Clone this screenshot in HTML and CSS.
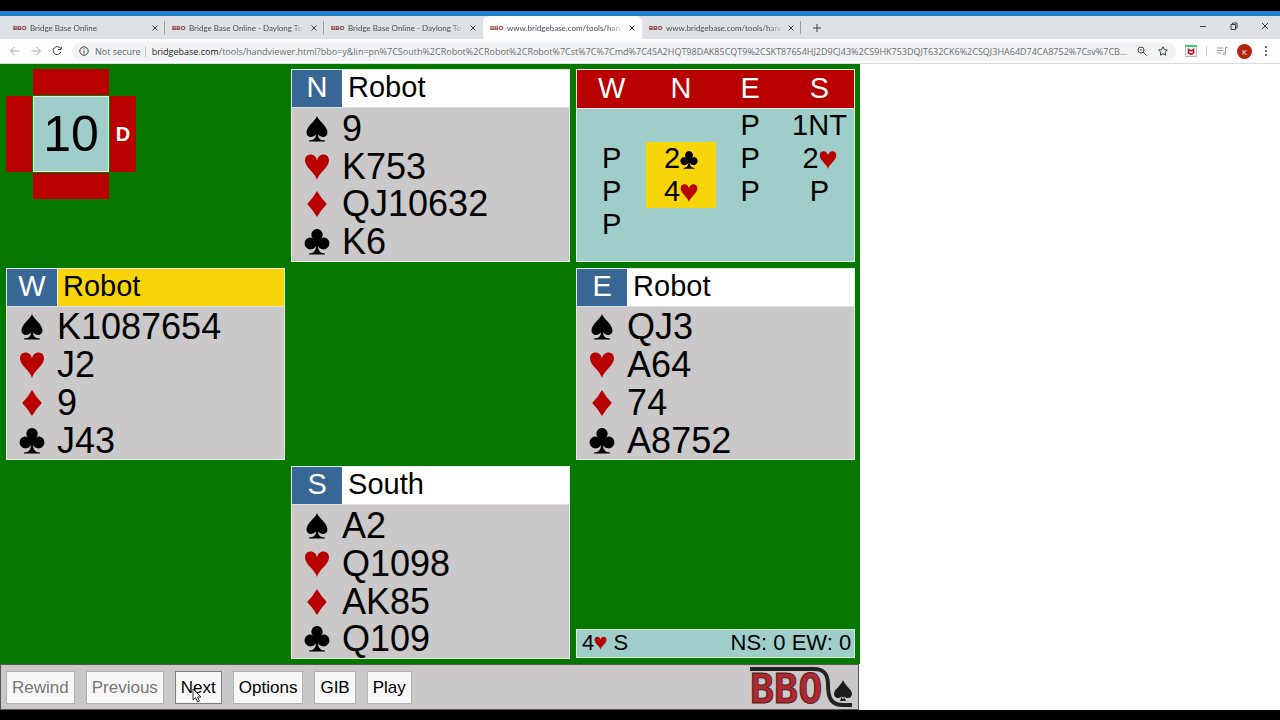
FILE: index.html
```
<!DOCTYPE html>
<html lang="en">
<head>
  <meta charset="UTF-8">
  <meta name="viewport" content="width=device-width, initial-scale=1.0">
  <title>Bridge Base Online - Hand Viewer</title>
  <link rel="stylesheet" href="styles.css">
</head>
<body>
  <!-- shared icons -->
  <svg class="sprite" aria-hidden="true">
    <symbol id="spade" viewBox="0 0 26 26"><path d="M13 0C14.500 5 23.500 10 23.500 16.500C23.500 21.500 17.500 22.500 14 18.500C14.200 22 16 24.300 21 24.500V25.500H5V24.500C10 24.300 11.800 22 12 18.500C8.500 22.500 2.500 21.500 2.500 16.500C2.500 10 11.500 5 13 0Z"/></symbol>
    <symbol id="heart" viewBox="0 0 26 26"><path d="M13 26C11.500 19 1 13.500 1 6.500C1 2.500 3.500 0.500 6.700 0.500C10 0.500 12.300 3 13 6.500C13.700 3 16 0.500 19.300 0.500C22.500 0.500 25 2.500 25 6.500C25 13.500 14.500 19 13 26Z"/></symbol>
    <symbol id="diamond" viewBox="0 0 26 26"><path d="M13 0Q17 7 22.800 13Q17 19 13 26Q9 19 3.200 13Q9 7 13 0Z"/></symbol>
    <symbol id="club" viewBox="0 0 26 26"><path d="M13 0A5.800 5.800 0 0 1 17 9.800C18 9 19 8.500 20.500 8.500A6 6 0 1 1 14 17C14.200 21.500 16 24.300 21 24.500V25.500H5V24.500C10 24.300 11.800 21.500 12 17A6 6 0 1 1 5.500 8.500C7 8.500 8 9 9 9.800A5.800 5.800 0 0 1 13 0Z"/></symbol>
    <symbol id="cross" viewBox="0 0 8 8"><path d="M1.500 1.500L6.500 6.500M6.500 1.500L1.500 6.500"/></symbol>
  </svg>

  <header class="browser">
    <div class="tab-strip">
      <div class="tab"><span class="favicon">BBO</span><span class="tab-title">Bridge Base Online</span><button class="tab-close" aria-label="Close tab"><svg><use href="#cross"/></svg></button></div>
      <div class="tab"><span class="favicon">BBO</span><span class="tab-title">Bridge Base Online - Daylong To</span><button class="tab-close" aria-label="Close tab"><svg><use href="#cross"/></svg></button></div>
      <div class="tab before-active"><span class="favicon">BBO</span><span class="tab-title">Bridge Base Online - Daylong To</span><button class="tab-close" aria-label="Close tab"><svg><use href="#cross"/></svg></button></div>
      <div class="tab active"><span class="favicon">BBO</span><span class="tab-title">www.bridgebase.com/tools/hand</span><button class="tab-close" aria-label="Close tab"><svg><use href="#cross"/></svg></button></div>
      <div class="tab"><span class="favicon">BBO</span><span class="tab-title">www.bridgebase.com/tools/hand</span><button class="tab-close" aria-label="Close tab"><svg><use href="#cross"/></svg></button></div>
      <button class="new-tab" aria-label="New tab"><svg viewBox="0 0 10 10"><path d="M5 1V9M1 5H9"/></svg></button>
      <div class="window-buttons">
        <button aria-label="Minimize"><svg viewBox="0 0 8 8"><path d="M1 4.500H7"/></svg></button>
        <button aria-label="Restore"><svg viewBox="0 0 8 8"><path d="M1 2.500H5.500V7.500H1ZM2.500 2.500V1H7V6H5.500"/></svg></button>
        <button aria-label="Close"><svg viewBox="0 0 8 8"><path d="M1 1L7 7M7 1L1 7"/></svg></button>
      </div>
    </div>

    <div class="address-row">
      <button class="nav-btn faded" aria-label="Back"><svg viewBox="0 0 12 12"><path d="M10.500 6H2M5.500 2L1.500 6L5.500 10"/></svg></button>
      <button class="nav-btn faded" aria-label="Forward"><svg viewBox="0 0 12 12"><path d="M1.500 6H10M6.500 2L10.500 6L6.500 10"/></svg></button>
      <button class="nav-btn" aria-label="Reload"><svg viewBox="0 0 12 12"><path d="M9.500 3.500A4 4 0 1 0 10 6.500M10.200 1.500V4.500H7"/></svg></button>
      <div class="omnibox">
        <svg class="info" viewBox="0 0 10 10"><circle cx="5" cy="5" r="4.200"/><path d="M5 4.500V7.500M5 2.500V3.500"/></svg>
        <span class="not-secure">Not secure</span>
        <label class="domain" for="url">bridgebase.com</label>
        <input id="url" type="text" value="/tools/handviewer.html?bbo=y&amp;lin=pn%7CSouth%2CRobot%2CRobot%2CRobot%7Cst%7C%7Cmd%7C4SA2HQT98DAK85CQT9%2CSKT87654HJ2D9CJ43%2CS9HK753DQJT632CK6%2CSQJ3HA64D74CA8752%7Csv%7CB...">
        <button class="box-btn" aria-label="Zoom"><svg viewBox="0 0 10 10"><circle cx="4" cy="4" r="3"/><path d="M6.200 6.200L9.500 9.500M2.700 4H5.300"/></svg></button>
        <button class="box-btn" aria-label="Bookmark"><svg viewBox="0 0 10 10"><path d="M5 0.800L6.300 3.600L9.400 4L7.100 6.100L7.700 9.200L5 7.700L2.300 9.200L2.900 6.100L0.600 4L3.700 3.600Z"/></svg></button>
      </div>
      <div class="extensions">
        <svg class="shield" viewBox="0 0 12 12"><path d="M0.500 0.500H11.500V11.500H0.500Z" fill="#f4f4f4" stroke="#b5b5b5"/><path d="M0 0H12V2H0Z" fill="#35d07f"/><path d="M3.500 4.500L5 5.500H7L8.500 4.500V8L6 9.300L3.500 8Z" fill="none" stroke="#b3122c" stroke-width="1.500"/></svg>
        <span class="divider"></span>
        <svg class="playlist" viewBox="0 0 12 12"><path d="M1 3H7.500M1 5.500H7.500M1 8H5M11.500 2.500H9.500V8.500"/><circle cx="8.300" cy="8.800" r="1.200"/></svg>
        <button class="avatar">K</button>
        <button class="menu" aria-label="Menu"><svg viewBox="0 0 4 12"><circle cx="2" cy="2" r="1"/><circle cx="2" cy="6" r="1"/><circle cx="2" cy="10" r="1"/></svg></button>
      </div>
    </div>
  </header>

  <main class="viewer">
    <div class="table">
      <div class="board">
        <span class="vul top"></span>
        <span class="vul left"></span>
        <span class="board-number">10</span>
        <span class="vul right">D</span>
        <span class="vul bottom"></span>
      </div>

      <section class="hand north">
        <h2><span class="seat">N</span><span class="name">Robot</span></h2>
        <ul>
          <li><svg class="suit"><use href="#spade"/></svg>9</li>
          <li><svg class="suit red"><use href="#heart"/></svg>K753</li>
          <li><svg class="suit red"><use href="#diamond"/></svg>QJ10632</li>
          <li><svg class="suit"><use href="#club"/></svg>K6</li>
        </ul>
      </section>

      <div class="auction">
        <table>
          <thead>
            <tr><th>W</th><th>N</th><th>E</th><th>S</th></tr>
          </thead>
          <tbody>
            <tr><td></td><td></td><td>P</td><td>1NT</td></tr>
            <tr><td>P</td><td class="alert">2<svg class="suit"><use href="#club"/></svg></td><td>P</td><td>2<svg class="suit red"><use href="#heart"/></svg></td></tr>
            <tr><td>P</td><td class="alert">4<svg class="suit red"><use href="#heart"/></svg></td><td>P</td><td>P</td></tr>
            <tr><td>P</td><td></td><td></td><td></td></tr>
          </tbody>
        </table>
      </div>

      <section class="hand west on-turn">
        <h2><span class="seat">W</span><span class="name">Robot</span></h2>
        <ul>
          <li><svg class="suit"><use href="#spade"/></svg>K1087654</li>
          <li><svg class="suit red"><use href="#heart"/></svg>J2</li>
          <li><svg class="suit red"><use href="#diamond"/></svg>9</li>
          <li><svg class="suit"><use href="#club"/></svg>J43</li>
        </ul>
      </section>

      <section class="hand east">
        <h2><span class="seat">E</span><span class="name">Robot</span></h2>
        <ul>
          <li><svg class="suit"><use href="#spade"/></svg>QJ3</li>
          <li><svg class="suit red"><use href="#heart"/></svg>A64</li>
          <li><svg class="suit red"><use href="#diamond"/></svg>74</li>
          <li><svg class="suit"><use href="#club"/></svg>A8752</li>
        </ul>
      </section>

      <section class="hand south">
        <h2><span class="seat">S</span><span class="name">South</span></h2>
        <ul>
          <li><svg class="suit"><use href="#spade"/></svg>A2</li>
          <li><svg class="suit red"><use href="#heart"/></svg>Q1098</li>
          <li><svg class="suit red"><use href="#diamond"/></svg>AK85</li>
          <li><svg class="suit"><use href="#club"/></svg>Q109</li>
        </ul>
      </section>

      <div class="contract">
        <span>4<svg class="suit red"><use href="#heart"/></svg> S</span>
        <span>NS: 0 EW: 0</span>
      </div>
    </div>

    <div class="controls">
      <button disabled>Rewind</button>
      <button disabled>Previous</button>
      <button class="hovered">Next
        <svg class="cursor" viewBox="0 0 10 15"><path d="M1 1V12L3.500 9.500L5.500 14L7.500 13L5.500 9H9Z"/></svg>
      </button>
      <button>Options</button>
      <button>GIB</button>
      <button>Play</button>
      <svg class="logo" viewBox="0 0 106 42" role="img" aria-label="BBO">
        <path class="swash" d="M2 3H66C77 3 80 9 80 19C80 33 84 39 95 39H104"/>
        <text x="2" y="37">BBO</text>
        <path class="pip" d="M95 14C97 20 104 23 104 28C104 33 98 33 96 30L98 35H92L94 30C92 33 86 33 86 28C86 23 93 20 95 14Z"/>
        <circle class="dot" cx="95" cy="32" r="1"/>
      </svg>
    </div>
  </main>
</body>
</html>
```
FILE: styles.css
```
* {
  box-sizing: border-box;
}

body {
  margin: 0;
  height: 100vh;
  display: flex;
  flex-direction: column;
  padding: 11px 0 10px;
  background: #000;
  font-family: "Liberation Sans", Arial, sans-serif;
  color: #000;
}

button {
  font: inherit;
  padding: 0;
  border: none;
  background: none;
}

.sprite {
  display: none;
}

/* --- Browser bar --- */
.browser {
  border-top: 5px solid #1f7fd0;
  font-family: "Open Sans", "Noto Sans", sans-serif;
  font-size: 9px;
  color: #5f6368;
}

.browser svg {
  display: block;
  fill: none;
  stroke: #3c4043;
}

.tab-strip {
  display: flex;
  align-items: center;
  height: 23px;
  padding-left: 6px;
  background: #dee1e6;
}

.tab {
  position: relative;
  flex: 0 1 159px;
  min-width: 0;
  height: 100%;
  display: flex;
  align-items: center;
  gap: 5px;
  padding: 0 6px 0 7px;
  font-family: Lato, sans-serif;
  font-size: 8px;
  color: #4a4e52;
}

.tab::after {
  content: "";
  position: absolute;
  right: 0;
  top: 5px;
  height: 13px;
  border-right: 1px solid #9a9da2;
}

.tab.active::after,
.tab.before-active::after {
  display: none;
}

.tab.active {
  background: #fdfdfe;
  border-radius: 6px 6px 0 0;
}

.favicon {
  width: 12px;
  font: bold 6px "Liberation Sans", sans-serif;
  color: #7d1f24;
}

.tab-title {
  flex: 1;
  overflow: hidden;
  white-space: nowrap;
  mask-image: linear-gradient(to right, #000 88%, transparent);
}

.tab-close svg {
  width: 8px;
  height: 8px;
}

.new-tab {
  margin-left: 11px;
}

.new-tab svg {
  width: 10px;
  height: 10px;
}

.window-buttons {
  margin-left: auto;
  display: flex;
  gap: 23px;
  padding: 0 11px 3px 0;
}

.window-buttons svg {
  width: 8px;
  height: 8px;
}

.address-row {
  display: flex;
  align-items: center;
  height: 25px;
  padding: 0 12px 0 9px;
  background: #fdfdfe;
  border-bottom: 1px solid #dcdcde;
}

.nav-btn {
  margin-right: 9px;
}

.nav-btn svg {
  width: 12px;
  height: 12px;
}

.nav-btn.faded svg {
  stroke: #a7a9ac;
}

.omnibox {
  flex: 1;
  min-width: 0;
  display: flex;
  align-items: center;
  height: 19px;
  padding: 0 8px 0 7px;
  border-radius: 10px;
  background: #f1f3f4;
}

.info {
  width: 10px;
  height: 10px;
}

.not-secure {
  padding: 0 4px 0 6px;
  margin-right: 6px;
  border-right: 1px solid #c4c6c9;
  line-height: 11px;
  white-space: nowrap;
}

.domain {
  color: #202124;
}

.omnibox input {
  flex: 1;
  min-width: 0;
  padding: 0;
  border: none;
  outline: none;
  background: none;
  font: inherit;
  color: #6a6e72;
  text-overflow: ellipsis;
}

.box-btn {
  margin-left: 5px;
}

.box-btn + .box-btn {
  margin-left: 11px;
}

.box-btn svg {
  width: 10px;
  height: 10px;
}

.extensions {
  display: flex;
  align-items: center;
  gap: 9px;
  padding-left: 9px;
}

.extensions svg {
  width: 12px;
  height: 12px;
}

.extensions .shield {
  stroke: none;
}

.divider {
  height: 10px;
  border-right: 1px solid #d0d2d5;
}

.extensions .playlist {
  stroke: #9a9da1;
}

.avatar {
  width: 15px;
  height: 15px;
  border-radius: 50%;
  background: #b3240b;
  color: #fff;
  font-size: 8px;
  line-height: 15px;
}

.extensions .menu svg {
  width: 4px;
  fill: #3c4043;
  stroke: none;
}

.menu {
  margin-left: 3px;
}

/* --- Hand viewer --- */
.viewer {
  flex: 1;
  min-height: 0;
  display: flex;
  flex-direction: column;
  padding-right: 32.8%;
  background: #fff;
}

.table {
  flex: 1;
  min-height: 0;
  display: grid;
  grid-template-columns: repeat(3, 1fr);
  grid-template-rows: repeat(3, 1fr);
  gap: 6px;
  padding: 5px 5px 5px 6px;
  background: #067800;
}

.suit {
  width: 26px;
  height: 26px;
  fill: #000;
}

.suit.red {
  fill: #b90000;
}

/* board number and vulnerability */
.board {
  display: grid;
  grid-template-columns: 26px 76px 26px;
  grid-template-rows: 26px 76px 26px;
  gap: 1px;
}

.vul {
  display: flex;
  align-items: center;
  justify-content: center;
  background: #b90000;
  color: #fff;
  font-size: 20px;
  font-weight: bold;
}

.vul.top,
.vul.bottom {
  grid-column: 2;
}

.vul.left {
  grid-column: 1;
}

.board-number {
  display: flex;
  align-items: center;
  justify-content: center;
  border: 1px solid #d8f5d0;
  background: #9fceca;
  font-size: 50px;
}

/* hands */
.hand {
  display: flex;
  flex-direction: column;
  border: 1px solid #e4efe2;
  background: #cac8c9;
}

.north,
.south {
  grid-column: 2;
}

.west {
  grid-column: 1;
}

.east {
  grid-column: 3;
}

.hand h2 {
  display: flex;
  margin: 0;
  height: 38px;
  font-size: 29px;
  font-weight: normal;
  line-height: 34px;
  border-bottom: 1px solid #dedede;
}

.seat {
  width: 50px;
  background: #386796;
  color: #fff;
  text-align: center;
}

.name {
  flex: 1;
  padding-left: 6px;
  background: #fff;
}

.on-turn .name {
  border-left: 1px solid #e4efe2;
  padding-left: 5px;
  background: #f8d508;
}

.hand ul {
  flex: 1;
  display: flex;
  flex-direction: column;
  margin: 0;
  padding: 2px 0 0;
  list-style: none;
}

.hand li {
  flex: 1;
  display: flex;
  align-items: center;
  font-size: 36px;
  line-height: 36px;
}

.hand li .suit {
  margin: 0 12px;
}

/* auction */
.auction {
  border: 1px solid #e4efe2;
  background: #9fceca;
}

.auction table {
  width: 100%;
  table-layout: fixed;
  border-collapse: collapse;
  font-size: 29px;
  line-height: 33px;
  text-align: center;
}

.auction th {
  height: 38px;
  padding: 0;
  border-bottom: 1px solid #e4efe2;
  background: #b90000;
  color: #fff;
  font-weight: normal;
}

.auction td {
  height: 33px;
  padding: 0;
}

.auction .alert {
  background: #f8d508;
}

.auction .suit {
  width: 18px;
  height: 18px;
  vertical-align: -1px;
}

/* result line */
.contract {
  grid-column: 3;
  align-self: end;
  display: flex;
  justify-content: space-between;
  margin-bottom: 1px;
  padding: 0 3px 1px 5px;
  border: 1px solid #d8f5d0;
  background: #9fceca;
  font-size: 22px;
  line-height: 26px;
}

.contract .suit {
  width: 13px;
  height: 14px;
}

/* --- Bottom buttons --- */
.controls {
  display: flex;
  align-items: center;
  gap: 11px;
  height: 46px;
  margin-right: 1px;
  padding: 0 4px 0 5px;
  border: 1px solid #555;
  background: #cac8c9;
  font-size: 17px;
}

.controls button {
  position: relative;
  height: 33px;
  padding: 1px 5px 0;
  border: 1px solid #b2b2b2;
  background: #f8f7f8;
  color: #000;
}

.controls button:disabled {
  color: #767676;
}

.controls .hovered {
  border-color: #7d7d7d;
}

.cursor {
  position: absolute;
  left: 16px;
  top: 16px;
  width: 10px;
  height: 15px;
  fill: #fff;
  stroke: #333;
}

.logo {
  width: 106px;
  height: 42px;
  margin-left: auto;
}

.logo text {
  font: bold 40px "DejaVu Sans Mono", monospace;
  fill: #b3272d;
  stroke: #4b2527;
}

.logo .swash {
  fill: none;
  stroke: #222;
  stroke-width: 4;
}

.logo .pip {
  fill: #1c1c1e;
}

.logo .dot {
  fill: #cac8c9;
}
```
